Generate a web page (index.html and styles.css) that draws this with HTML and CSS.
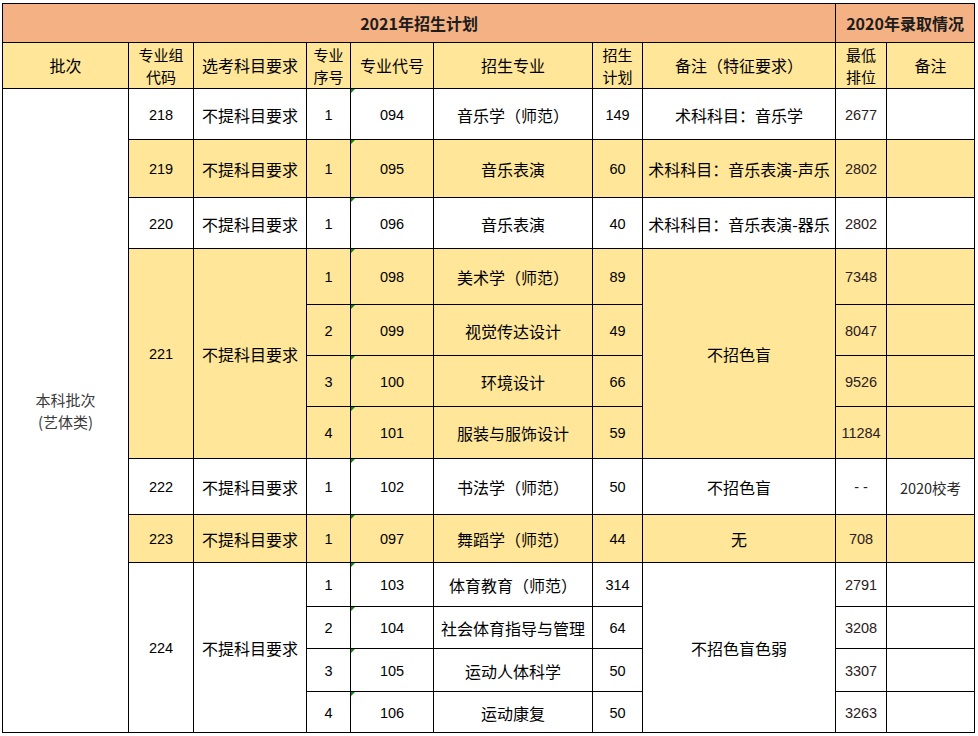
FILE: index.html
```html
<!DOCTYPE html>
<html lang="zh-CN">
<head>
<meta charset="utf-8">
<title>2021年招生计划</title>
<link rel="stylesheet" href="styles.css">
</head>
<body>
<table class="plan">
  <colgroup>
    <col class="w126"><col class="w65"><col class="w113"><col class="w44"><col class="w83">
    <col class="w159"><col class="w50"><col class="w193"><col class="w51"><col class="w88">
  </colgroup>
  <thead>
    <tr class="h39 head1">
      <th colspan="8">2021年招生计划</th>
      <th colspan="2">2020年录取情况</th>
    </tr>
    <tr class="h46 head2">
      <th>批次</th>
      <th class="two">专业组<br>代码</th>
      <th>选考科目要求</th>
      <th class="two">专业<br>序号</th>
      <th>专业代号</th>
      <th>招生专业</th>
      <th class="two">招生<br>计划</th>
      <th>备注（特征要求）</th>
      <th class="two">最低<br>排位</th>
      <th>备注</th>
    </tr>
  </thead>
  <tbody>
    <tr class="h51">
      <td rowspan="13" class="batch">本科批次<br>(艺体类)</td>
      <td class="n">218</td><td>不提科目要求</td><td class="n">1</td><td class="n c">094</td>
      <td>音乐学（师范）</td><td class="n">149</td><td>术科科目：音乐学</td><td class="n r">2677</td><td></td>
    </tr>
    <tr class="h58 y">
      <td class="n">219</td><td>不提科目要求</td><td class="n">1</td><td class="n c">095</td>
      <td>音乐表演</td><td class="n">60</td><td>术科科目：音乐表演-声乐</td><td class="n r">2802</td><td></td>
    </tr>
    <tr class="h51">
      <td class="n">220</td><td>不提科目要求</td><td class="n">1</td><td class="n c">096</td>
      <td>音乐表演</td><td class="n">40</td><td>术科科目：音乐表演-器乐</td><td class="n r">2802</td><td></td>
    </tr>
    <tr class="h56 y">
      <td rowspan="4" class="n">221</td><td rowspan="4">不提科目要求</td><td class="n">1</td><td class="n c">098</td>
      <td>美术学（师范）</td><td class="n">89</td><td rowspan="4">不招色盲</td><td class="n r">7348</td><td></td>
    </tr>
    <tr class="h51 y">
      <td class="n">2</td><td class="n c">099</td><td>视觉传达设计</td><td class="n">49</td><td class="n r">8047</td><td></td>
    </tr>
    <tr class="h51 y">
      <td class="n">3</td><td class="n c">100</td><td>环境设计</td><td class="n">66</td><td class="n r">9526</td><td></td>
    </tr>
    <tr class="h52 y">
      <td class="n">4</td><td class="n c">101</td><td>服装与服饰设计</td><td class="n">59</td><td class="n r">11284</td><td></td>
    </tr>
    <tr class="h56">
      <td class="n">222</td><td>不提科目要求</td><td class="n">1</td><td class="n c">102</td>
      <td>书法学（师范）</td><td class="n">50</td><td>不招色盲</td><td class="n r">- -</td><td class="soft">2020校考</td>
    </tr>
    <tr class="h48 y">
      <td class="n">223</td><td>不提科目要求</td><td class="n">1</td><td class="n c">097</td>
      <td>舞蹈学（师范）</td><td class="n">44</td><td>无</td><td class="n r">708</td><td></td>
    </tr>
    <tr class="h44">
      <td rowspan="4" class="n">224</td><td rowspan="4">不提科目要求</td><td class="n">1</td><td class="n c">103</td>
      <td>体育教育（师范）</td><td class="n">314</td><td rowspan="4">不招色盲色弱</td><td class="n r">2791</td><td></td>
    </tr>
    <tr class="h42">
      <td class="n">2</td><td class="n c">104</td><td>社会体育指导与管理</td><td class="n">64</td><td class="n r">3208</td><td></td>
    </tr>
    <tr class="h43">
      <td class="n">3</td><td class="n c">105</td><td>运动人体科学</td><td class="n">50</td><td class="n r">3307</td><td></td>
    </tr>
    <tr class="h41">
      <td class="n">4</td><td class="n c">106</td><td>运动康复</td><td class="n">50</td><td class="n r">3263</td><td></td>
    </tr>
  </tbody>
</table>
</body>
</html>
```

FILE: styles.css
```css
html, body {
  margin: 0;
  background: #ffffff;
}
body {
  padding: 3px 0 0 2px;
  font-family: "Noto Sans CJK SC", sans-serif;
  color: #000;
}
.plan {
  border-collapse: collapse;
  table-layout: fixed;
  width: 973px;
}
.plan th, .plan td {
  border: 1px solid #000;
  padding: 0;
  text-align: center;
  vertical-align: middle;
  font-size: 16px;
  line-height: 21px;
  font-weight: normal;
  white-space: nowrap;
  overflow: hidden;
}
.plan tbody td {
  padding-top: 2px;
}
.w126 { width: 126px; }
.w65 { width: 65px; }
.w113 { width: 113px; }
.w44 { width: 44px; }
.w83 { width: 83px; }
.w159 { width: 159px; }
.w50 { width: 50px; }
.w193 { width: 193px; }
.w51 { width: 51px; }
.w88 { width: 88px; }

.h39 { height: 39px; }
.h46 { height: 46px; }
.h41 { height: 41px; }
.h42 { height: 42px; }
.h43 { height: 43px; }
.h44 { height: 44px; }
.h48 { height: 48px; }
.h51 { height: 51px; }
.h52 { height: 52px; }
.h56 { height: 56px; }
.h58 { height: 58px; }

.head1 th {
  background: #f4b183;
  font-weight: bold;
  color: #1c1c1c;
}
.head2 th {
  background: #ffe699;
}
.plan .head2 th.two {
  font-size: 15px;
  line-height: 22px;
}
.y td {
  background: #ffe699;
}
.plan td.batch {
  background: #ffffff;
  color: #3a3a3a;
  font-size: 15px;
  line-height: 22px;
  padding-top: 0;
}
.plan .n {
  font-family: "Liberation Sans", "Noto Sans CJK SC", sans-serif;
  font-size: 14.5px;
}
.plan .r {
  color: #2a2020;
}
.plan .soft {
  color: #2a2a2a;
  font-size: 14.5px;
}
.plan td.c {
  position: relative;
}
.plan td.c::before {
  content: "";
  position: absolute;
  left: 0;
  top: 0;
  width: 0;
  height: 0;
  border-top: 4px solid #0a8a0a;
  border-right: 4px solid transparent;
}
```
